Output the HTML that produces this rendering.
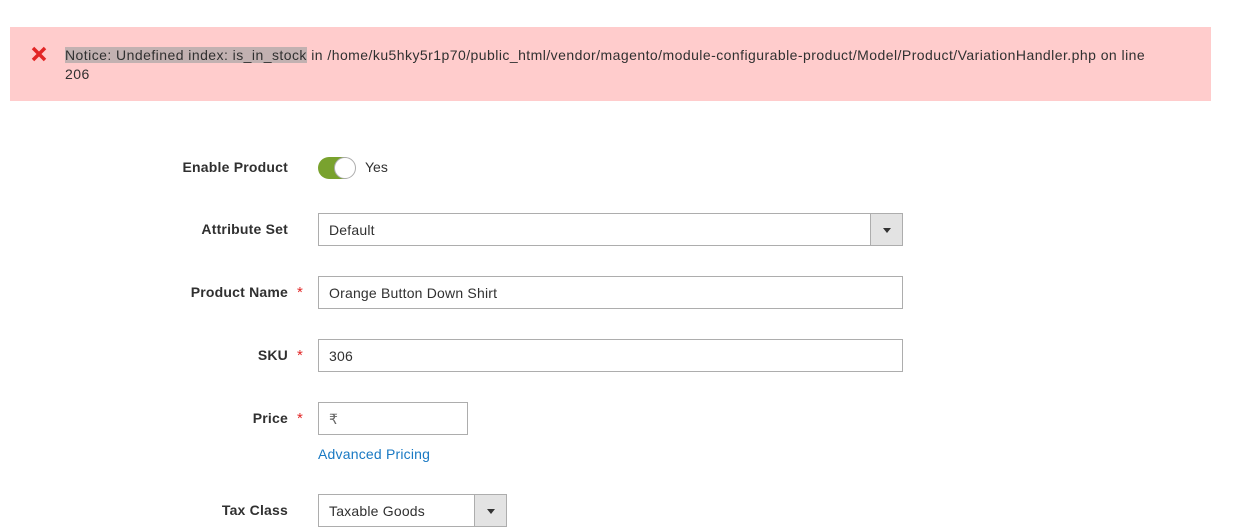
<!DOCTYPE html>
<html><head><style>
body{margin:0;width:1233px;height:527px;background:#fff;font-family:"Liberation Sans",sans-serif;font-size:14px;color:#303030;position:relative;overflow:hidden}
.a{position:absolute}
.msg{left:10px;top:27px;width:1201px;height:74px;background:#fcc}
.lbl{position:absolute;right:945px;font-weight:bold;color:#303030;font-size:14px;letter-spacing:0.2px}
.req{position:absolute;left:297px;color:#e22626;font-size:15px}
.in{position:absolute;left:318px;border:1px solid #adadad;background:#fff;box-sizing:border-box;height:33px;padding:8px 10px;font-size:14px;line-height:16px;letter-spacing:0.2px}
.btn{position:absolute;top:-1px;right:-1px;width:33px;height:33px;background:#e3e3e3;border:1px solid #adadad;box-sizing:border-box}
.btn:after{content:"";position:absolute;left:12px;top:14px;border-left:4px solid transparent;border-right:4px solid transparent;border-top:5px solid #333}
</style></head><body>
<div class="a msg"></div>
<svg class="a" style="left:31px;top:46px" width="16" height="16" viewBox="0 0 16 16"><path d="M2 2L14 14M14 2L2 14" stroke="#e22626" stroke-width="3.5"/></svg>
<div class="a" style="left:65px;top:46px;width:1130px;line-height:19px;letter-spacing:0.45px"><span style="background:#c2b1b1">Notice: Undefined index: is_in_stock</span> in /home/ku5hky5r1p70/public_html/vendor/magento/module-configurable-product/Model/Product/VariationHandler.php on line<br>206</div>

<div class="lbl" style="top:159px">Enable Product</div>
<div class="a" style="left:318px;top:157px;width:37px;height:22px;border-radius:11px;background:#79a22e"></div>
<div class="a" style="left:334px;top:157px;width:20px;height:20px;border-radius:50%;background:#fff;border:1px solid #adadad"></div>
<div class="a" style="left:365px;top:159px">Yes</div>

<div class="lbl" style="top:221px">Attribute Set</div>
<div class="in" style="top:213px;width:585px">Default<div class="btn"></div></div>

<div class="lbl" style="top:284px">Product Name</div><div class="req" style="top:284px">*</div>
<div class="in" style="top:276px;width:585px">Orange Button Down Shirt</div>

<div class="lbl" style="top:347px">SKU</div><div class="req" style="top:347px">*</div>
<div class="in" style="top:339px;width:585px">306</div>

<div class="lbl" style="top:410px">Price</div><div class="req" style="top:410px">*</div>
<div class="in" style="top:402px;width:150px;color:#666">₹</div>
<div class="a" style="left:318px;top:446px;color:#1979c3;letter-spacing:0.2px">Advanced Pricing</div>

<div class="lbl" style="top:502px">Tax Class</div>
<div class="in" style="top:494px;width:189px">Taxable Goods<div class="btn"></div></div>
</body></html>
